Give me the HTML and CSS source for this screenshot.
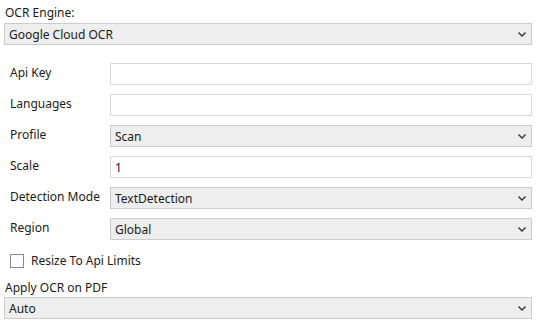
FILE: index.html
```html
<!DOCTYPE html>
<html lang="en">
<head>
    <meta charset="UTF-8">
    <title>OCR Settings</title>
    <link rel="stylesheet" href="styles.css">
</head>
<body>
    <div class="panel">
        <div class="caption">OCR Engine:</div>
        <div class="combo">
            <span>Google Cloud OCR</span>
            <svg class="chevron" width="8" height="5" viewBox="0 0 8 5"><polyline points="0.5,0.5 4,4 7.5,0.5" fill="none" stroke="#333" stroke-width="1.4"/></svg>
        </div>

        <div class="fields">
            <div class="label">Api Key</div>
            <div class="textbox"></div>

            <div class="label">Languages</div>
            <div class="textbox"></div>

            <div class="label">Profile</div>
            <div class="combo">
                <span>Scan</span>
                <svg class="chevron" width="8" height="5" viewBox="0 0 8 5"><polyline points="0.5,0.5 4,4 7.5,0.5" fill="none" stroke="#333" stroke-width="1.4"/></svg>
            </div>

            <div class="label">Scale</div>
            <div class="textbox">1</div>

            <div class="label">Detection Mode</div>
            <div class="combo">
                <span>TextDetection</span>
                <svg class="chevron" width="8" height="5" viewBox="0 0 8 5"><polyline points="0.5,0.5 4,4 7.5,0.5" fill="none" stroke="#333" stroke-width="1.4"/></svg>
            </div>

            <div class="label">Region</div>
            <div class="combo">
                <span>Global</span>
                <svg class="chevron" width="8" height="5" viewBox="0 0 8 5"><polyline points="0.5,0.5 4,4 7.5,0.5" fill="none" stroke="#333" stroke-width="1.4"/></svg>
            </div>
        </div>

        <label class="check">
            <span class="box"></span>
            <span>Resize To Api Limits</span>
        </label>

        <div class="caption pdf">Apply OCR on PDF</div>
        <div class="combo">
            <span>Auto</span>
            <svg class="chevron" width="8" height="5" viewBox="0 0 8 5"><polyline points="0.5,0.5 4,4 7.5,0.5" fill="none" stroke="#333" stroke-width="1.4"/></svg>
        </div>
    </div>
</body>
</html>
```

FILE: styles.css
```css
body {
    margin: 0;
    background-color: #ffffff;
    font-family: "Noto Sans", "Open Sans", sans-serif;
    font-size: 12px;
    color: #1b1b1b;
}

.panel {
    display: flex;
    flex-direction: column;
    padding: 5px 9px 0 4px;
}

.caption {
    height: 18px;
    line-height: 16px;
    padding-left: 1px;
}

.combo {
    box-sizing: border-box;
    height: 22px;
    display: flex;
    align-items: center;
    justify-content: space-between;
    padding: 0 5px 0 4px;
    background-color: #eeeeee;
    border: 1px solid #cccccc;
}

.textbox {
    box-sizing: border-box;
    height: 22px;
    display: flex;
    align-items: center;
    padding: 0 4px;
    background-color: #ffffff;
    border: 1px solid #d9d9d9;
}

.fields {
    display: grid;
    grid-template-columns: 100px 1fr;
    row-gap: 9px;
    margin-top: 18px;
    padding-left: 6px;
}

.label {
    display: flex;
    align-items: center;
    padding-bottom: 3px;
}

.check {
    display: flex;
    align-items: center;
    gap: 7px;
    margin-top: 14px;
    padding-left: 6px;
    height: 13px;
}

.box {
    box-sizing: border-box;
    width: 14px;
    height: 14px;
    border: 1px solid #8a8a8a;
    background-color: #ffffff;
}

.pdf {
    margin-top: 13px;
    height: 17px;
}
```
